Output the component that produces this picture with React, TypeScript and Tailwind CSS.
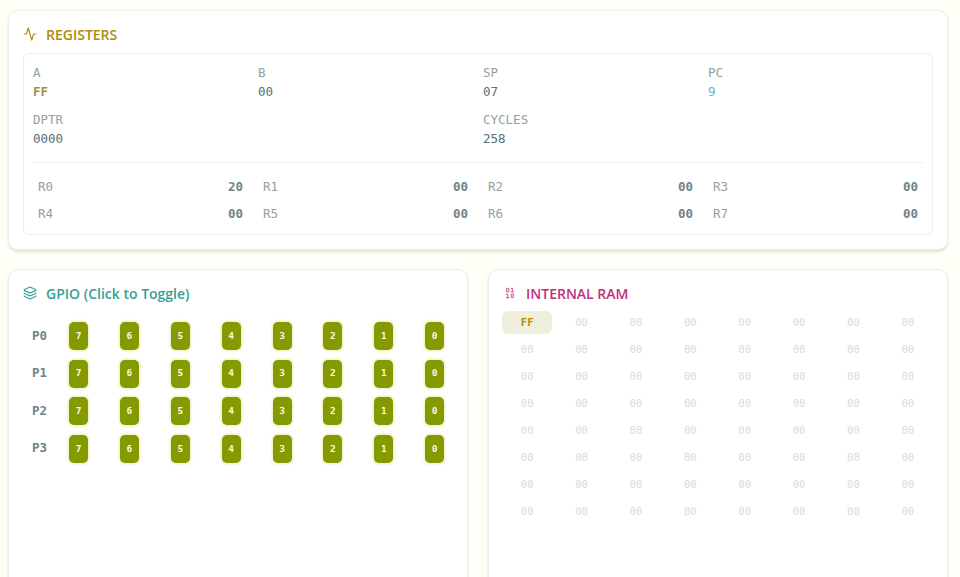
import { Activity, Binary, Layers } from "lucide-react";

const mono = "font-['DejaVu_Sans_Mono',monospace]";
const topRegs = [
  { name: "A", value: "FF", tone: "font-bold text-[#a08c50]" },
  { name: "B", value: "00", tone: "text-[#586e75]" },
  { name: "SP", value: "07", tone: "text-[#586e75]" },
  { name: "PC", value: "9", tone: "text-[#6bb3c4]" },
];
const lowerRegs = [
  { name: "DPTR", value: "0000", span: "col-span-2" },
  { name: "CYCLES", value: "258", span: "col-span-2" },
];
const bank = ["R0", "R1", "R2", "R3", "R4", "R5", "R6", "R7"];
const ports = ["P0", "P1", "P2", "P3"];
const pins = [7, 6, 5, 4, 3, 2, 1, 0];
const ram = Array.from({ length: 64 }, (_, i) => (i === 0 ? "FF" : "00"));

function Reg({ name, value, tone, span }: { name: string; value: string; tone?: string; span?: string }) {
  return (
    <div className={`flex flex-col h-[36px] ${span ?? ""}`}>
      <span className="text-[12.5px] leading-[18px] text-[#93a1a1]">{name}</span>
      <span className={`mt-px text-[12.5px] leading-[18px] ${tone ?? "text-[#586e75]"}`}>{value}</span>
    </div>
  );
}

export default function App() {
  return (
    <div className="h-[577px] overflow-hidden bg-[#fffef7] pl-2 pr-3 pt-[10px] font-['Open_Sans',sans-serif]">
      {/* registers */}
      <section className="h-[241px] rounded-[10px] border border-[#f1efe6] border-b-2 border-b-[#efebdc] bg-white px-[14px] pt-[13px] shadow-sm">
        <h2 className="flex h-5 items-center gap-[9px] text-[14px] font-semibold text-[#b08a10]">
          <Activity size={14} strokeWidth={2} />
          REGISTERS
        </h2>
        <div className={`mt-[9px] h-[182px] rounded-md border border-[#eeeeea] px-[9px] pt-[10px] ${mono}`}>
          <div className="grid grid-cols-4 gap-x-[10px] gap-y-[11px]">
            {topRegs.map((r) => (
              <Reg key={r.name} name={r.name} value={r.value} tone={r.tone} />
            ))}
            {lowerRegs.map((r) => (
              <Reg key={r.name} name={r.name} value={r.value} span={r.span} />
            ))}
          </div>
          <div className="mt-[15px] border-t border-[#eeeeea] pt-[13px]">
            <div className="grid grid-cols-4 gap-x-[10px] gap-y-[5px]">
              {bank.map((r, i) => (
                <div key={r} className="flex h-[22px] items-center justify-between px-[5px] text-[12.5px]">
                  <span className="text-[#93a1a1]">{r}</span>
                  <span className="font-bold text-[#6f8389]">{i === 0 ? "20" : "00"}</span>
                </div>
              ))}
            </div>
          </div>
        </div>
      </section>

      <div className="mt-[18px] grid grid-cols-2 gap-x-5">
        {/* gpio */}
        <section className="h-[400px] rounded-[10px] border border-[#f1efe6] bg-white px-[14px] pt-[13px] shadow-sm">
          <h2 className="flex h-5 items-center gap-[9px] text-[14px] font-semibold text-[#3a9e96]">
            <Layers size={14} strokeWidth={2} />
            GPIO (Click to Toggle)
          </h2>
          <div className="mt-[19px] flex flex-col gap-[9.6px]">
            {ports.map((p) => (
              <div key={p} className="flex h-7 items-center">
                <span className={`w-[46px] pl-[9px] text-[12.5px] font-bold text-[#6f8389] ${mono}`}>{p}</span>
                <div className="flex gap-[31.9px]">
                  {pins.map((n) => (
                    <button
                      key={n}
                      className={`flex h-7 w-[19px] items-center justify-center rounded-[5px] bg-[#859900] text-[9.5px] font-bold text-[#fdf6e3] shadow-[0_0_3px_1px_#e6ecb4] ${mono}`}
                    >
                      {n}
                    </button>
                  ))}
                </div>
              </div>
            ))}
          </div>
        </section>

        {/* ram */}
        <section className="h-[400px] rounded-[10px] border border-[#f1efe6] bg-white px-[14px] pt-[13px] shadow-sm">
          <h2 className="flex h-5 items-center gap-[9px] text-[14px] font-semibold text-[#c0307a]">
            <Binary size={14} strokeWidth={2} className="text-[#d9659f]" />
            INTERNAL RAM
          </h2>
          <div className={`-ml-px mt-[8px] grid grid-cols-8 gap-x-[4px] gap-y-[4px] ${mono}`}>
            {ram.map((v, i) => (
              <div
                key={i}
                className={`flex h-[23px] items-center justify-center rounded-md text-[10.5px] ${
                  i === 0 ? "bg-[#f0eedd] font-bold text-[#b58900]" : "text-[#d6dcda]"
                }`}
              >
                {v}
              </div>
            ))}
          </div>
        </section>
      </div>
    </div>
  );
}
